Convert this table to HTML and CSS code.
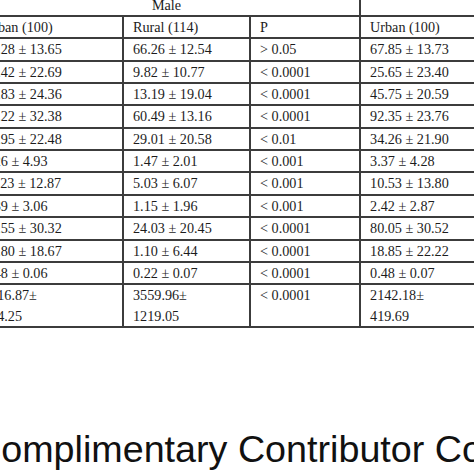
FILE: index.html
```html
<!DOCTYPE html>
<html lang="en">
<head>
<meta charset="utf-8">
<title>Table</title>
<link rel="stylesheet" href="styles.css">
</head>
<body>
<div class="page">
  <table class="data">
    <colgroup>
      <col class="c-wide"><col class="c-mid"><col class="c-p"><col class="c-mid"><col class="c-mid"><col class="c-p">
    </colgroup>
    <thead>
      <tr class="group">
        <th colspan="3">Male</th>
        <th colspan="3">Female</th>
      </tr>
      <tr class="sub">
        <th>Urban (100)</th><th>Rural (114)</th><th>P</th><th>Urban (100)</th><th>Rural (114)</th><th>P</th>
      </tr>
    </thead>
    <tbody>
      <tr><td>67.28 ± 13.65</td><td>66.26 ± 12.54</td><td>&gt; 0.05</td><td>67.85 ± 13.73</td><td>66.10 ± 12.40</td><td>&gt; 0.05</td></tr>
      <tr><td>24.42 ± 22.69</td><td>9.82 ± 10.77</td><td>&lt; 0.0001</td><td>25.65 ± 23.40</td><td>9.10 ± 11.02</td><td>&lt; 0.0001</td></tr>
      <tr><td>46.83 ± 24.36</td><td>13.19 ± 19.04</td><td>&lt; 0.0001</td><td>45.75 ± 20.59</td><td>14.02 ± 18.30</td><td>&lt; 0.0001</td></tr>
      <tr><td>90.22 ± 32.38</td><td>60.49 ± 13.16</td><td>&lt; 0.0001</td><td>92.35 ± 23.76</td><td>61.20 ± 14.05</td><td>&lt; 0.0001</td></tr>
      <tr><td>36.95 ± 22.48</td><td>29.01 ± 20.58</td><td>&lt; 0.01</td><td>34.26 ± 21.90</td><td>28.40 ± 19.77</td><td>&lt; 0.01</td></tr>
      <tr><td>3.26 ± 4.93</td><td>1.47 ± 2.01</td><td>&lt; 0.001</td><td>3.37 ± 4.28</td><td>1.52 ± 2.10</td><td>&lt; 0.001</td></tr>
      <tr><td>11.23 ± 12.87</td><td>5.03 ± 6.07</td><td>&lt; 0.001</td><td>10.53 ± 13.80</td><td>4.96 ± 6.11</td><td>&lt; 0.001</td></tr>
      <tr><td>2.39 ± 3.06</td><td>1.15 ± 1.96</td><td>&lt; 0.001</td><td>2.42 ± 2.87</td><td>1.20 ± 1.88</td><td>&lt; 0.001</td></tr>
      <tr><td>81.55 ± 30.32</td><td>24.03 ± 20.45</td><td>&lt; 0.0001</td><td>80.05 ± 30.52</td><td>25.11 ± 21.02</td><td>&lt; 0.0001</td></tr>
      <tr><td>17.80 ± 18.67</td><td>1.10 ± 6.44</td><td>&lt; 0.0001</td><td>18.85 ± 22.22</td><td>1.05 ± 5.90</td><td>&lt; 0.0001</td></tr>
      <tr><td>0.48 ± 0.06</td><td>0.22 ± 0.07</td><td>&lt; 0.0001</td><td>0.48 ± 0.07</td><td>0.23 ± 0.06</td><td>&lt; 0.0001</td></tr>
      <tr class="tall"><td>2316.87±<br>474.25</td><td>3559.96±<br>1219.05</td><td>&lt; 0.0001</td><td>2142.18±<br>419.69</td><td>3412.50±<br>1150.32</td><td>&lt; 0.0001</td></tr>
    </tbody>
  </table>
  <p class="stamp">Complimentary Contributor Copy</p>
</div>
</body>
</html>
```
FILE: styles.css
```css
html, body {
  margin: 0;
  padding: 0;
  background: #ffffff;
  overflow: hidden;
}

.page {
  width: 474px;
  height: 474px;
  overflow: hidden;
}

.data {
  border-collapse: collapse;
  table-layout: fixed;
  width: 751px;
  margin-top: -7.4px;
  margin-left: -28px;
  font-family: "Liberation Serif", "Times New Roman", serif;
  font-size: 14.2px;
  line-height: 20.36px;
  color: #1c1c1c;
}

.c-wide { width: 150px; }
.c-mid { width: 127px; }
.c-p { width: 110px; }

.data th,
.data td {
  border: 2px solid #3c3c3c;
  padding: 0 0 0 9px;
  text-align: left;
  vertical-align: top;
  font-weight: normal;
  white-space: nowrap;
}

.data .group th {
  text-align: center;
  padding-left: 0;
}

.stamp {
  margin: 103px 0 0 -26px;
  font-family: "Liberation Sans", Arial, sans-serif;
  font-size: 37.7px;
  line-height: 1;
  color: #111111;
  white-space: nowrap;
}
```
